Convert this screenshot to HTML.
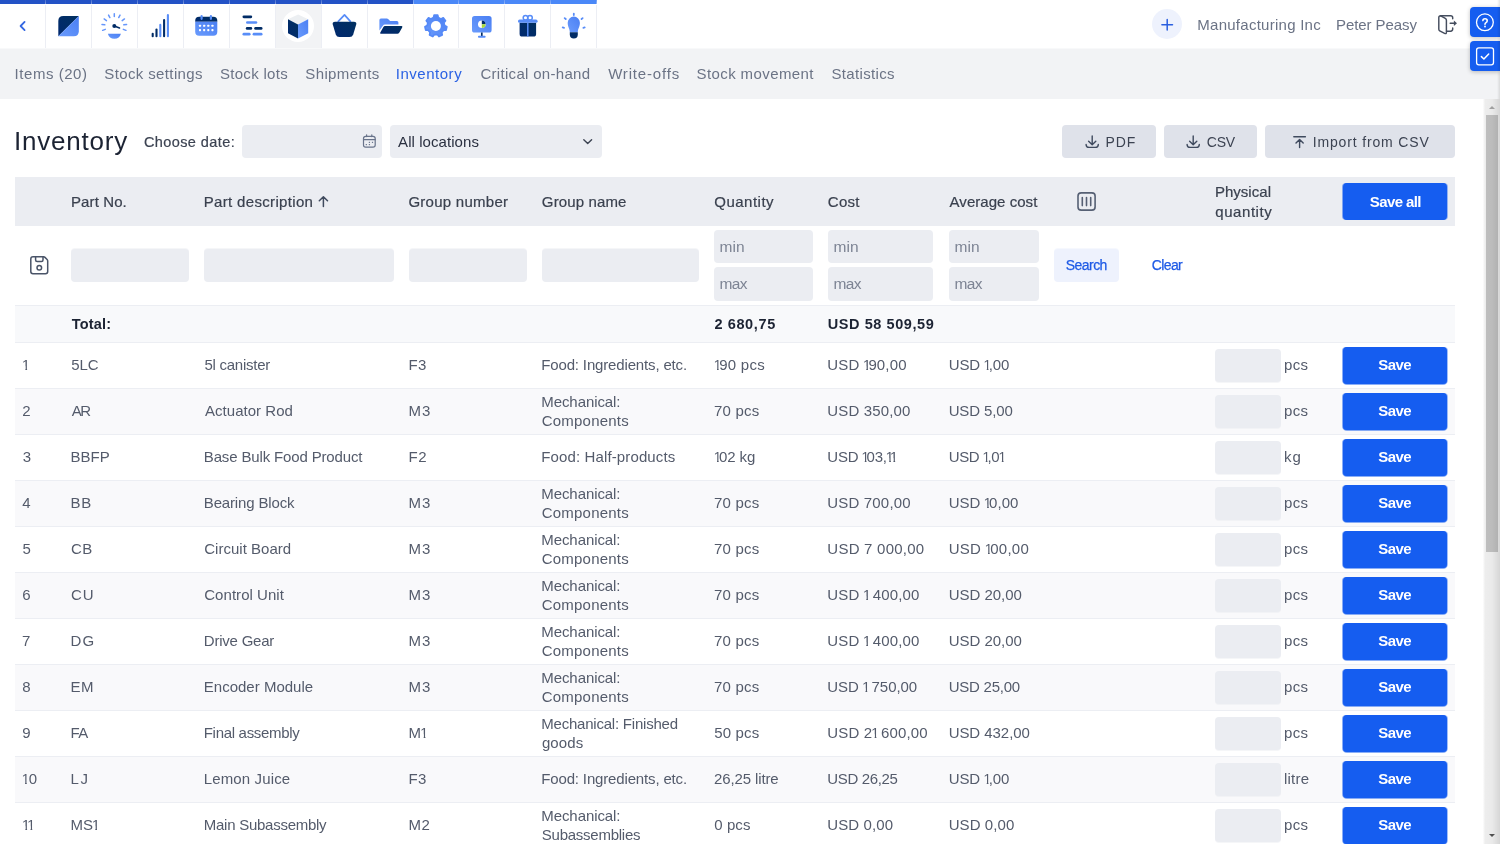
<!DOCTYPE html>
<html lang="en"><head><meta charset="utf-8"><title>Inventory</title>
<style>
*{box-sizing:border-box;margin:0;padding:0}
html,body{width:1500px;height:844px;overflow:hidden;background:#fff}
body{font-family:"Liberation Sans",sans-serif;font-size:15px;color:#4d5464;position:relative}
.x{position:absolute;white-space:nowrap;font-size:15px;line-height:18px;color:#545b6b}
.n1{display:inline-block;font-weight:normal;margin:0 -2.8px 0 -1.1px;clip-path:polygon(1px 0,5.3px 0,5.3px 18px,3.6px 18px,3.6px 10px,1px 10px)}
.topbar,.subnav,.content{will-change:transform}
/* top bar */
.topbar{position:absolute;left:0;top:0;width:1500px;height:49px;background:#fff;border-bottom:1px solid #f8f9fa}
.strip1{position:absolute;left:0;top:0;width:413px;height:4px;background:#2352c6}
.strip2{position:absolute;left:413px;top:0;width:184px;height:4px;background:#4a88f8}
.sep{position:absolute;top:0;width:1px;height:48px;background:linear-gradient(180deg,rgba(236,238,244,.18) 0,rgba(236,238,244,.45) 4px,#fff 4px,#fff 5px,#eceef4 5px)}
.cellact{position:absolute;left:275px;top:4px;width:46px;height:44px;background:#f2f3f5}
.cellact i{position:absolute;left:6.8px;top:5.8px;width:32.2px;height:32.2px;border-radius:50%;background:#fff}
.ico{position:absolute;display:block;overflow:visible}
.subnav{position:absolute;left:0;top:49px;width:1500px;height:50px;background:#f2f3f5}
.nv{color:#6b7385}
.nv.act{color:#2b62e3}
.tr{color:#6b7385}
.plus{position:absolute;left:1152px;top:9px;width:30px;height:30px;border-radius:50%;background:#eef2fd}
.fab{position:absolute;left:1470px;width:30px;height:30.1px;background:#155df0;border-radius:4px 0 0 4px;box-shadow:0 1px 4px rgba(0,0,0,.25)}
/* content */
.content{position:absolute;left:0;top:99px;width:1485px;height:745px;background:#fff;overflow:hidden}
.h1{color:#1c2333}
.lbl{color:#3c4352;-webkit-text-stroke:.2px #3c4352}
.inp{position:absolute;background:#ebedf2;border-radius:4px;display:block}
.sel{color:#2a3040}
.gbtn{position:absolute;top:25.7px;height:33.8px;background:#dfe2ea;border-radius:4px}
.gb{color:#3c4352}
.table{position:absolute;left:15px;top:0;width:1440px;height:745px}
.thead{position:absolute;left:0;top:78px;width:1440px;height:49px;background:#ebedf2}
.th{color:#3a414f;-webkit-text-stroke:.2px #3a414f}
.frow{position:absolute;left:0;top:127px;width:1440px;height:79px;background:#fff}
.ph{color:#7d8494}
.sbtn{position:absolute;background:#eef2fd;border-radius:4px;box-shadow:0 -1px 0 rgba(238,242,253,.5)}
.lk{color:#1f5be6;-webkit-text-stroke:.25px #1f5be6}
.trow{position:absolute;left:0;top:206px;width:1440px;height:37px;background:#f8f9fb;border-top:1px solid #eceef3}
.tt{color:#1c2333;font-weight:bold}
.row{position:absolute;left:0;width:1440px;height:46px;border-top:1px solid #eceef3;background:#fff}
.row.alt{background:#f9f9fb}
.pq{left:1200px;top:6px;width:66px;height:33px;box-shadow:0 1px 0 rgba(235,237,242,.5)}
.btn{position:absolute;background:#155df0;border-radius:4px}
.bt{color:#fff;font-weight:bold}
.save{left:1328px;top:4px;width:104px;height:37px;box-shadow:-1px 0 0 rgba(21,93,240,.5),1px 0 0 rgba(21,93,240,.4),0 1px 0 rgba(21,93,240,.5)}
/* scrollbar */
.edge{position:absolute;left:1497px;top:0;width:3px;height:99px;background:linear-gradient(90deg,rgba(0,0,0,0),rgba(0,0,0,.10))}
.sb{position:absolute;left:1483px;top:99px;width:17px;height:745px;background:linear-gradient(90deg,#fff 0,#f4f4f4 1px,#ededed 2.5px,#eaeaea 9px,#e0e0e0 13px,#d6d6d6 17px)}
.sbt{position:absolute;left:1486px;top:115px;width:12px;height:437px;background:linear-gradient(90deg,#bebebe 0,#bcbcbc 50%,#b1b1b1 100%)}
.sba{position:absolute;left:1488.8px;width:0;height:0;border-left:3.2px solid transparent;border-right:3.2px solid transparent}
.sba.u{top:106.3px;border-bottom:3.8px solid #a0a0a0}
.sba.d{top:833.5px;border-top:3.8px solid #505050}

</style></head>
<body>
<div class="topbar">
<div class="strip1"></div><div class="strip2"></div>
<div class="cellact"><i></i></div>
<div class="sep" style="left:45.00px"></div><div class="sep" style="left:90.94px"></div><div class="sep" style="left:136.88px"></div><div class="sep" style="left:182.82px"></div><div class="sep" style="left:228.76px"></div><div class="sep" style="left:274.70px"></div><div class="sep" style="left:320.64px"></div><div class="sep" style="left:366.58px"></div><div class="sep" style="left:412.52px"></div><div class="sep" style="left:458.46px"></div><div class="sep" style="left:504.40px"></div><div class="sep" style="left:550.34px"></div><div class="sep" style="left:596.28px"></div>
<svg class="ico" style="left:0;top:0" width="600" height="48" viewBox="0 0 600 48">
<defs><linearGradient id="lg" x1="0" y1="1" x2="1" y2="0"><stop offset="0" stop-color="#6a9bfc"/><stop offset="1" stop-color="#4a7ff3"/></linearGradient><linearGradient id="ng" x1="0" y1="1" x2="1" y2="0"><stop offset="0" stop-color="#00286f"/><stop offset="1" stop-color="#01305f"/></linearGradient></defs>
<path d="M24.6 21.9 L20.6 26 L24.6 30.1" fill="none" stroke="#3568e2" stroke-width="1.8" stroke-linecap="round" stroke-linejoin="round"/>
<path d="M58.3 36.2 L78.8 16 L63.3 16 Q58.3 16 58.3 21 Z" fill="url(#ng)"/>
<path d="M58.3 36.2 L78.8 16 L78.8 31.2 Q78.8 36.2 73.8 36.2 Z" fill="url(#lg)"/>
<path d="M105.28 29.38 L102.65 30.34" stroke="#6596fb" stroke-width="1.5" stroke-linecap="round"/>
<path d="M104.78 24.85 L102.01 24.48" stroke="#6596fb" stroke-width="1.5" stroke-linecap="round"/>
<path d="M106.44 20.59 L104.14 18.99" stroke="#6596fb" stroke-width="1.5" stroke-linecap="round"/>
<path d="M109.87 17.58 L108.57 15.10" stroke="#6596fb" stroke-width="1.5" stroke-linecap="round"/>
<path d="M114.30 16.50 L114.30 13.70" stroke="#6596fb" stroke-width="1.5" stroke-linecap="round"/>
<path d="M118.73 17.58 L120.03 15.10" stroke="#6596fb" stroke-width="1.5" stroke-linecap="round"/>
<path d="M122.16 20.59 L124.46 18.99" stroke="#6596fb" stroke-width="1.5" stroke-linecap="round"/>
<path d="M123.82 24.85 L126.59 24.48" stroke="#6596fb" stroke-width="1.5" stroke-linecap="round"/>
<path d="M123.32 29.38 L125.95 30.34" stroke="#6596fb" stroke-width="1.5" stroke-linecap="round"/>
<circle cx="114.3" cy="26.1" r="2" fill="#012c66"/>
<path d="M114.3 26.1 L119.5 27.9" stroke="#012c66" stroke-width="1.6" stroke-linecap="round"/>
<path d="M107.9 33.7 H120.9 A6.7 6.7 0 0 1 107.9 33.7 Z" fill="url(#lg)"/>
<path d="M152.7 33.7 V36.2" stroke="#012c66" stroke-width="2.1" stroke-linecap="round"/>
<path d="M156.5 29.5 V36.2" stroke="#012c66" stroke-width="2.1" stroke-linecap="round"/>
<path d="M160.3 24.9 V36.2" stroke="#588df8" stroke-width="2.1" stroke-linecap="round"/>
<path d="M164.1 20 V36.2" stroke="#012c66" stroke-width="2.1" stroke-linecap="round"/>
<path d="M167.9 15.1 V36.2" stroke="#588df8" stroke-width="2.1" stroke-linecap="round"/>
<path d="M195.2 21.8 V20.8 Q195.2 16.8 199.2 16.8 H213.3 Q217.3 16.8 217.3 20.8 V21.8 Z" fill="url(#ng)"/>
<path d="M195.2 21.8 H217.3 V31.8 Q217.3 35.8 213.3 35.8 H199.2 Q195.2 35.8 195.2 31.8 Z" fill="url(#lg)"/>
<path d="M201.6 16.2 V18.8" stroke="#588df8" stroke-width="2.2" stroke-linecap="round"/>
<path d="M210.9 16.2 V18.8" stroke="#588df8" stroke-width="2.2" stroke-linecap="round"/>
<rect x="198.95" y="24.75" width="2.1" height="2.1" rx=".6" fill="#fff"/>
<rect x="203.1" y="24.75" width="2.1" height="2.1" rx=".6" fill="#fff"/>
<rect x="207.25" y="24.75" width="2.1" height="2.1" rx=".6" fill="#fff"/>
<rect x="211.4" y="24.75" width="2.1" height="2.1" rx=".6" fill="#fff"/>
<rect x="198.95" y="29.05" width="2.1" height="2.1" rx=".6" fill="#fff"/>
<rect x="203.1" y="29.05" width="2.1" height="2.1" rx=".6" fill="#fff"/>
<rect x="207.25" y="29.05" width="2.1" height="2.1" rx=".6" fill="#fff"/>
<rect x="211.4" y="29.05" width="2.1" height="2.1" rx=".6" fill="#fff"/>
<path d="M243.85 16.8 H250.85" stroke="#012c66" stroke-width="2.7" stroke-linecap="round"/>
<path d="M247.35 22.5 H255.95" stroke="#588df8" stroke-width="2.7" stroke-linecap="round"/>
<path d="M247.15 28.4 H250.85" stroke="#012c66" stroke-width="2.7" stroke-linecap="round"/>
<path d="M255.55 28.4 H261.15" stroke="#012c66" stroke-width="2.7" stroke-linecap="round"/>
<path d="M243.85 34.2 H249.25" stroke="#588df8" stroke-width="2.7" stroke-linecap="round"/>
<path d="M253.95 34.2 H261.15" stroke="#588df8" stroke-width="2.7" stroke-linecap="round"/>
<path d="M298.1 14.4 L308.2 19.3 L298 24.6 L288 19.3 Z" fill="#eceff2"/>
<path d="M288 19.3 L298 24.6 V38.4 L288 33.3 Z" fill="url(#ng)"/>
<path d="M298 24.6 L308.2 19.3 V33.3 L298 38.4 Z" fill="url(#lg)"/>
<path d="M337.8 21.9 L344.5 14.9 L350.8 21.9" fill="none" stroke="#588df8" stroke-width="1.7" stroke-linejoin="round"/>
<path d="M335.2 21.7 H353.8 Q357 21.7 356.2 24.6 L353.2 34.6 Q352.4 37.1 349.6 37.1 H339.4 Q336.6 37.1 335.8 34.6 L332.8 24.6 Q332 21.7 335.2 21.7 Z" fill="url(#ng)"/>
<path d="M379.4 30.6 V19.9 Q379.4 18.4 380.9 18.4 H386.9 Q387.6 18.4 388.1 18.9 L390.1 20.9 H396.9 Q398.4 20.9 398.4 22.4 V24.4 H385 Q383.6 24.4 382.9 25.7 Z" fill="url(#lg)"/>
<path d="M385 26.1 H401.4 Q402.9 26.1 402.2 27.4 L399.2 32.8 Q398.6 33.8 397.4 33.8 H381 Q379.6 33.8 380.3 32.6 L383.4 27 Q383.9 26.1 385 26.1 Z" fill="url(#ng)"/>
<g fill="url(#lg)"><path fill-rule="evenodd" stroke="#5589f7" stroke-width="1.7" stroke-linejoin="round" d="M433.50 17.64 L434.08 15.15 L437.72 15.15 L438.30 17.64 L440.94 18.91 L443.25 17.82 L445.51 20.66 L443.93 22.66 L444.59 25.52 L446.88 26.64 L446.07 30.18 L443.52 30.20 L441.69 32.49 L442.24 34.99 L438.97 36.56 L437.37 34.58 L434.43 34.58 L432.83 36.56 L429.56 34.99 L430.11 32.49 L428.28 30.20 L425.73 30.18 L424.92 26.64 L427.21 25.52 L427.87 22.66 L426.29 20.66 L428.55 17.82 L430.86 18.91 Z"/><circle cx="435.9" cy="26" r="5" fill="#fff"/></g>
<rect x="472" y="16.1" width="19.6" height="16.4" rx="2.6" fill="url(#lg)"/>
<path d="M481.8 32.5 V36" stroke="#012c66" stroke-width="1.7"/>
<path d="M478.9 36.8 H484.7" stroke="#588df8" stroke-width="1.9" stroke-linecap="round"/>
<circle cx="481.8" cy="24.2" r="3.8" fill="#fff"/>
<path d="M481.8 24.2 V20.4 A3.8 3.8 0 0 1 485.6 24.2 Z" fill="#012c66"/>
<path d="M481.8 24.2 H485.6 A3.8 3.8 0 0 1 481.8 28 Z" fill="#a9d93c"/>
<circle cx="525.5" cy="17.8" r="2.3" fill="none" stroke="#588df8" stroke-width="1.5"/>
<circle cx="530" cy="17.8" r="2.3" fill="none" stroke="#588df8" stroke-width="1.5"/>
<path d="M519.6 22.7 H536.1 V33.9 Q536.1 36.5 533.5 36.5 H522.2 Q519.6 36.5 519.6 33.9 Z" fill="url(#ng)"/>
<rect x="518" y="19.6" width="19.6" height="3.2" rx="1.6" fill="#588df8"/>
<path d="M527.8 22.7 V36.5" stroke="#588df8" stroke-width="1.5"/>
<path d="M569.8 32.2 C569.8 28.5 567.7 27 567.7 22.7 A6.1 6.1 0 0 1 579.9 22.7 C579.9 27 577.8 28.5 577.8 32.2 Z" fill="url(#lg)"/>
<path d="M569.8 32.2 H577.8 V34.4 A4 4 0 0 1 569.8 34.4 Z" fill="#012c66"/>
<path d="M573.80 15.10 L573.80 13.70" stroke="#588df8" stroke-width="1.8" stroke-linecap="round"/>
<path d="M565.74 19.05 L564.66 18.15" stroke="#588df8" stroke-width="1.8" stroke-linecap="round"/>
<path d="M581.56 19.05 L582.64 18.15" stroke="#588df8" stroke-width="1.8" stroke-linecap="round"/>
<path d="M564.08 27.78 L562.72 27.42" stroke="#588df8" stroke-width="1.8" stroke-linecap="round"/>
<path d="M583.32 27.78 L584.68 27.42" stroke="#588df8" stroke-width="1.8" stroke-linecap="round"/>
</svg>
<div class="plus"></div>
<svg class="ico" style="left:1140px;top:0" width="360" height="100" viewBox="1140 0 360 100">
<path d="M1161.9 24.8 H1172.5 M1167.2 19.5 V30.1" stroke="#2a5fe0" stroke-width="1.5" stroke-linecap="round"/>
<g fill="none" stroke="#454d5e" stroke-width="1.45" stroke-linejoin="round" stroke-linecap="round">
<path d="M1440.7 15.7 Q1438.8 15.7 1438.8 17.6 V29.3 Q1438.8 30.3 1439.7 30.8 L1444.6 33.4 Q1446.4 34.2 1446.4 32.3 V20.2 Q1446.4 18.9 1445.3 18.3 L1440.7 15.9"/>
<path d="M1440.7 15.7 H1450.6 Q1452.7 15.7 1452.7 17.8 V18.8 M1452.7 28 V29.1 Q1452.7 31.2 1450.6 31.2 H1446.6"/>
<path d="M1450.2 23.3 H1454.5"/>
</g>
<path d="M1453.9 20.5 L1457 23.3 L1453.9 26.1 Z" fill="#454d5e"/>
</svg>
<span class="x tr" style="left:1197.28px;top:15.80px;letter-spacing:0.263px">Manufacturing Inc</span>
<span class="x tr" style="left:1335.98px;top:15.80px;letter-spacing:-0.067px">Peter Peasy</span>
</div>
<div class="subnav">
<span class="x nv" style="left:14.62px;top:15.80px;letter-spacing:0.531px">Items (20)</span>
<span class="x nv" style="left:104.31px;top:15.80px;letter-spacing:0.373px">Stock settings</span>
<span class="x nv" style="left:219.91px;top:15.80px;letter-spacing:0.310px">Stock lots</span>
<span class="x nv" style="left:305.31px;top:15.80px;letter-spacing:0.380px">Shipments</span>
<span class="x nv act" style="left:395.82px;top:15.80px;letter-spacing:0.515px">Inventory</span>
<span class="x nv" style="left:480.45px;top:15.80px;letter-spacing:0.304px">Critical on-hand</span>
<span class="x nv" style="left:608.14px;top:15.80px;letter-spacing:0.830px">Write-offs</span>
<span class="x nv" style="left:696.51px;top:15.80px;letter-spacing:0.407px">Stock movement</span>
<span class="x nv" style="left:831.51px;top:15.80px;letter-spacing:0.335px">Statistics</span>
</div>
<div class="fab" style="top:7.3px"></div>
<div class="fab" style="top:41.2px"></div>
<svg class="ico" style="left:1466px;top:0" width="34" height="80" viewBox="1466 0 34 80">
<circle cx="1484.9" cy="22.3" r="8.4" fill="none" stroke="#fff" stroke-width="1.3"/>
<path d="M1482.9 20.6 Q1482.9 18.8 1485 18.8 Q1487.2 18.8 1487.2 20.7 Q1487.2 21.9 1486 22.6 Q1485 23.2 1485 24.3" fill="none" stroke="#fff" stroke-width="1.6" stroke-linecap="round"/>
<circle cx="1485" cy="26.5" r=".9" fill="#fff"/>
<rect x="1476.6" y="47.9" width="16.9" height="16.9" rx="2.2" fill="none" stroke="#fff" stroke-width="1.3"/>
<path d="M1481.4 56.6 L1483.9 59 L1488.7 54" fill="none" stroke="#fff" stroke-width="1.5" stroke-linecap="round" stroke-linejoin="round"/>
</svg>
<div class="content">
<span class="x h1" style="left:13.89px;top:33.49px;letter-spacing:0.804px;font-size:26px">Inventory</span>
<span class="x lbl" style="left:143.88px;top:33.98px;letter-spacing:0.416px;font-size:14.5px">Choose date:</span>
<span class="inp" style="left:242px;top:25.7px;width:140.4px;height:33.6px"></span>
<span class="inp" style="left:390px;top:25.7px;width:211.8px;height:33.6px"></span>
<span class="x sel" style="left:398.07px;top:33.50px;letter-spacing:0.069px">All locations</span>
<div class="gbtn" style="left:1062.3px;width:93.4px"></div>
<div class="gbtn" style="left:1163.5px;width:93.5px"></div>
<div class="gbtn" style="left:1265px;width:189.6px"></div>
<span class="x gb" style="left:1105.44px;top:34.05px;letter-spacing:0.959px;font-size:14px">PDF</span>
<span class="x gb" style="left:1206.68px;top:34.05px;letter-spacing:-0.150px;font-size:14px">CSV</span>
<span class="x gb" style="left:1312.72px;top:34.05px;letter-spacing:0.842px;font-size:14px">Import from CSV</span>
<div class="table">
<div class="thead">
<span class="x th" style="left:55.98px;top:16.40px;letter-spacing:0.109px">Part No.</span>
<span class="x th" style="left:188.78px;top:16.40px;letter-spacing:0.331px">Part description</span>
<span class="x th" style="left:393.45px;top:16.40px;letter-spacing:0.262px">Group number</span>
<span class="x th" style="left:526.85px;top:16.40px;letter-spacing:0.137px">Group name</span>
<span class="x th" style="left:699.28px;top:16.40px;letter-spacing:0.496px">Quantity</span>
<span class="x th" style="left:812.85px;top:16.40px;letter-spacing:0.267px">Cost</span>
<span class="x th" style="left:934.57px;top:16.40px;letter-spacing:0.043px">Average cost</span>
<span class="x th" style="left:1199.88px;top:5.80px;letter-spacing:0.035px">Physical</span>
<span class="x th" style="left:1200.28px;top:25.60px;letter-spacing:0.561px">quantity</span>
<span class="btn" style="left:1328px;top:6px;width:104px;height:37px;box-shadow:-1px 0 0 rgba(21,93,240,.5),1px 0 0 rgba(21,93,240,.4)"></span>
<span class="x bt" style="left:1354.76px;top:15.80px;letter-spacing:-0.600px">Save all</span>
</div>
<div class="frow">
<span class="inp" style="left:56px;top:23px;width:118px;height:33px;box-shadow:0 -1px 0 rgba(235,237,242,.5)"></span><span class="inp" style="left:189px;top:23px;width:190px;height:33px;box-shadow:0 -1px 0 rgba(235,237,242,.5)"></span><span class="inp" style="left:394px;top:23px;width:118px;height:33px;box-shadow:0 -1px 0 rgba(235,237,242,.5)"></span><span class="inp" style="left:527px;top:23px;width:157px;height:33px;box-shadow:0 -1px 0 rgba(235,237,242,.5)"></span><span class="inp" style="left:699.3px;top:4px;width:98.7px;height:33.3px"></span><span class="inp" style="left:699.3px;top:41.3px;width:98.7px;height:33.5px"></span><span class="inp" style="left:813px;top:4px;width:105.4px;height:33.3px"></span><span class="inp" style="left:813px;top:41.3px;width:105.4px;height:33.5px"></span><span class="inp" style="left:933.8px;top:4px;width:90px;height:33.3px"></span><span class="inp" style="left:933.8px;top:41.3px;width:90px;height:33.5px"></span>
<span class="x ph" style="left:704.47px;top:12.03px;letter-spacing:0.081px;font-size:15.5px">min</span><span class="x ph" style="left:704.47px;top:49.33px;letter-spacing:-0.581px;font-size:15.5px">max</span><span class="x ph" style="left:818.47px;top:12.03px;letter-spacing:0.081px;font-size:15.5px">min</span><span class="x ph" style="left:818.47px;top:49.33px;letter-spacing:-0.581px;font-size:15.5px">max</span><span class="x ph" style="left:939.47px;top:12.03px;letter-spacing:0.081px;font-size:15.5px">min</span><span class="x ph" style="left:939.47px;top:49.33px;letter-spacing:-0.581px;font-size:15.5px">max</span>
<span class="sbtn" style="left:1039px;top:23px;width:65px;height:33px"></span>
<span class="x lk" style="left:1050.78px;top:30.15px;letter-spacing:-0.543px;font-size:14px">Search</span>
<span class="x lk" style="left:1136.68px;top:30.15px;letter-spacing:-0.600px;font-size:14px">Clear</span>
</div>
<div class="trow">
<span class="x tt" style="left:56.84px;top:8.98px;letter-spacing:0.191px;font-size:14.5px">Total:</span><span class="x tt" style="left:699.40px;top:8.98px;letter-spacing:0.624px;font-size:14.5px">2 680,75</span><span class="x tt" style="left:812.73px;top:8.98px;letter-spacing:0.579px;font-size:14.5px">USD 58 509,59</span>
</div>
<div class="row" style="top:243px"><span class="x " style="left:7.88px;top:13.20px;letter-spacing:0.000px"><b class="n1">1</b></span><span class="x " style="left:56.21px;top:13.20px;letter-spacing:-0.022px">5LC</span><span class="x " style="left:189.41px;top:13.20px;letter-spacing:-0.253px">5l canister</span><span class="x " style="left:393.58px;top:13.20px;letter-spacing:0.375px">F3</span><span class="x " style="left:526.28px;top:13.20px;letter-spacing:-0.154px">Food: Ingredients, etc.</span><span class="x " style="left:699.47px;top:13.20px;letter-spacing:0.254px"><b class="n1">1</b>90 pcs</span><span class="x " style="left:812.34px;top:13.20px;letter-spacing:0.148px">USD <b class="n1">1</b>90,00</span><span class="x " style="left:933.64px;top:13.20px;letter-spacing:-0.054px">USD <b class="n1">1</b>,00</span><span class="inp pq"></span><span class="x " style="left:1269.03px;top:13.20px;letter-spacing:0.378px">pcs</span><span class="btn save"></span><span class="x bt" style="left:1363.16px;top:12.80px;letter-spacing:-0.498px">Save</span></div>
<div class="row alt" style="top:289px"><span class="x " style="left:7.15px;top:13.20px;letter-spacing:0.000px">2</span><span class="x " style="left:56.77px;top:13.20px;letter-spacing:-1.494px">AR</span><span class="x " style="left:189.97px;top:13.20px;letter-spacing:0.040px">Actuator Rod</span><span class="x " style="left:393.58px;top:13.20px;letter-spacing:0.831px">M3</span><span class="x " style="left:526.28px;top:3.70px;letter-spacing:-0.077px">Mechanical:</span><span class="x " style="left:526.75px;top:22.70px;letter-spacing:0.213px">Components</span><span class="x " style="left:699.02px;top:13.20px;letter-spacing:0.185px">70 pcs</span><span class="x " style="left:812.34px;top:13.20px;letter-spacing:0.137px">USD 350,00</span><span class="x " style="left:933.64px;top:13.20px;letter-spacing:-0.112px">USD 5,00</span><span class="inp pq"></span><span class="x " style="left:1269.03px;top:13.20px;letter-spacing:0.378px">pcs</span><span class="btn save"></span><span class="x bt" style="left:1363.16px;top:12.80px;letter-spacing:-0.498px">Save</span></div>
<div class="row" style="top:335px"><span class="x " style="left:7.64px;top:13.20px;letter-spacing:0.000px">3</span><span class="x " style="left:55.58px;top:13.20px;letter-spacing:0.004px">BBFP</span><span class="x " style="left:188.78px;top:13.20px;letter-spacing:-0.145px">Base Bulk Food Product</span><span class="x " style="left:393.58px;top:13.20px;letter-spacing:0.469px">F2</span><span class="x " style="left:526.28px;top:13.20px;letter-spacing:0.124px">Food: Half-products</span><span class="x " style="left:699.47px;top:13.20px;letter-spacing:-0.047px"><b class="n1">1</b>02 kg</span><span class="x " style="left:812.34px;top:13.20px;letter-spacing:-0.223px">USD <b class="n1">1</b>03,<b class="n1">1</b><b class="n1">1</b></span><span class="x " style="left:933.64px;top:13.20px;letter-spacing:-0.307px">USD <b class="n1">1</b>,0<b class="n1">1</b></span><span class="inp pq"></span><span class="x " style="left:1269.00px;top:13.20px;letter-spacing:0.925px">kg</span><span class="btn save"></span><span class="x bt" style="left:1363.16px;top:12.80px;letter-spacing:-0.498px">Save</span></div>
<div class="row alt" style="top:381px"><span class="x " style="left:7.26px;top:13.20px;letter-spacing:0.000px">4</span><span class="x " style="left:55.58px;top:13.20px;letter-spacing:0.600px">BB</span><span class="x " style="left:188.78px;top:13.20px;letter-spacing:-0.145px">Bearing Block</span><span class="x " style="left:393.58px;top:13.20px;letter-spacing:0.831px">M3</span><span class="x " style="left:526.28px;top:3.70px;letter-spacing:-0.077px">Mechanical:</span><span class="x " style="left:526.75px;top:22.70px;letter-spacing:0.213px">Components</span><span class="x " style="left:699.02px;top:13.20px;letter-spacing:0.185px">70 pcs</span><span class="x " style="left:812.34px;top:13.20px;letter-spacing:0.170px">USD 700,00</span><span class="x " style="left:933.64px;top:13.20px;letter-spacing:0.034px">USD <b class="n1">1</b>0,00</span><span class="inp pq"></span><span class="x " style="left:1269.03px;top:13.20px;letter-spacing:0.378px">pcs</span><span class="btn save"></span><span class="x bt" style="left:1363.16px;top:12.80px;letter-spacing:-0.498px">Save</span></div>
<div class="row" style="top:427px"><span class="x " style="left:7.61px;top:13.20px;letter-spacing:0.000px">5</span><span class="x " style="left:56.05px;top:13.20px;letter-spacing:0.287px">CB</span><span class="x " style="left:189.25px;top:13.20px;letter-spacing:0.011px">Circuit Board</span><span class="x " style="left:393.58px;top:13.20px;letter-spacing:0.831px">M3</span><span class="x " style="left:526.28px;top:3.70px;letter-spacing:-0.077px">Mechanical:</span><span class="x " style="left:526.75px;top:22.70px;letter-spacing:0.213px">Components</span><span class="x " style="left:699.02px;top:13.20px;letter-spacing:0.185px">70 pcs</span><span class="x " style="left:812.34px;top:13.20px;letter-spacing:0.239px">USD 7 000,00</span><span class="x " style="left:933.64px;top:13.20px;letter-spacing:0.259px">USD <b class="n1">1</b>00,00</span><span class="inp pq"></span><span class="x " style="left:1269.03px;top:13.20px;letter-spacing:0.378px">pcs</span><span class="btn save"></span><span class="x bt" style="left:1363.16px;top:12.80px;letter-spacing:-0.498px">Save</span></div>
<div class="row alt" style="top:473px"><span class="x " style="left:7.15px;top:13.20px;letter-spacing:0.000px">6</span><span class="x " style="left:56.05px;top:13.20px;letter-spacing:0.819px">CU</span><span class="x " style="left:189.25px;top:13.20px;letter-spacing:0.041px">Control Unit</span><span class="x " style="left:393.58px;top:13.20px;letter-spacing:0.831px">M3</span><span class="x " style="left:526.28px;top:3.70px;letter-spacing:-0.077px">Mechanical:</span><span class="x " style="left:526.75px;top:22.70px;letter-spacing:0.213px">Components</span><span class="x " style="left:699.02px;top:13.20px;letter-spacing:0.185px">70 pcs</span><span class="x " style="left:812.34px;top:13.20px;letter-spacing:0.148px">USD <b class="n1">1</b> 400,00</span><span class="x " style="left:933.64px;top:13.20px;letter-spacing:-0.016px">USD 20,00</span><span class="inp pq"></span><span class="x " style="left:1269.03px;top:13.20px;letter-spacing:0.378px">pcs</span><span class="btn save"></span><span class="x bt" style="left:1363.16px;top:12.80px;letter-spacing:-0.498px">Save</span></div>
<div class="row" style="top:519px"><span class="x " style="left:7.12px;top:13.20px;letter-spacing:0.000px">7</span><span class="x " style="left:55.58px;top:13.20px;letter-spacing:1.012px">DG</span><span class="x " style="left:188.78px;top:13.20px;letter-spacing:-0.218px">Drive Gear</span><span class="x " style="left:393.58px;top:13.20px;letter-spacing:0.831px">M3</span><span class="x " style="left:526.28px;top:3.70px;letter-spacing:-0.077px">Mechanical:</span><span class="x " style="left:526.75px;top:22.70px;letter-spacing:0.213px">Components</span><span class="x " style="left:699.02px;top:13.20px;letter-spacing:0.185px">70 pcs</span><span class="x " style="left:812.34px;top:13.20px;letter-spacing:0.148px">USD <b class="n1">1</b> 400,00</span><span class="x " style="left:933.64px;top:13.20px;letter-spacing:-0.016px">USD 20,00</span><span class="inp pq"></span><span class="x " style="left:1269.03px;top:13.20px;letter-spacing:0.378px">pcs</span><span class="btn save"></span><span class="x bt" style="left:1363.16px;top:12.80px;letter-spacing:-0.498px">Save</span></div>
<div class="row alt" style="top:565px"><span class="x " style="left:7.24px;top:13.20px;letter-spacing:0.000px">8</span><span class="x " style="left:55.58px;top:13.20px;letter-spacing:0.537px">EM</span><span class="x " style="left:188.78px;top:13.20px;letter-spacing:0.010px">Encoder Module</span><span class="x " style="left:393.58px;top:13.20px;letter-spacing:0.831px">M3</span><span class="x " style="left:526.28px;top:3.70px;letter-spacing:-0.077px">Mechanical:</span><span class="x " style="left:526.75px;top:22.70px;letter-spacing:0.213px">Components</span><span class="x " style="left:699.02px;top:13.20px;letter-spacing:0.185px">70 pcs</span><span class="x " style="left:812.34px;top:13.20px;letter-spacing:-0.043px">USD <b class="n1">1</b> 750,00</span><span class="x " style="left:933.64px;top:13.20px;letter-spacing:-0.228px">USD 25,00</span><span class="inp pq"></span><span class="x " style="left:1269.03px;top:13.20px;letter-spacing:0.378px">pcs</span><span class="btn save"></span><span class="x bt" style="left:1363.16px;top:12.80px;letter-spacing:-0.498px">Save</span></div>
<div class="row" style="top:611px"><span class="x " style="left:7.21px;top:13.20px;letter-spacing:0.000px">9</span><span class="x " style="left:55.58px;top:13.20px;letter-spacing:-0.694px">FA</span><span class="x " style="left:188.78px;top:13.20px;letter-spacing:-0.306px">Final assembly</span><span class="x " style="left:393.58px;top:13.20px;letter-spacing:0.104px">M<b class="n1">1</b></span><span class="x " style="left:526.28px;top:3.70px;letter-spacing:-0.217px">Mechanical: Finished</span><span class="x " style="left:526.88px;top:22.70px;letter-spacing:0.145px">goods</span><span class="x " style="left:699.21px;top:13.20px;letter-spacing:0.147px">50 pcs</span><span class="x " style="left:812.34px;top:13.20px;letter-spacing:0.132px">USD 2<b class="n1">1</b> 600,00</span><span class="x " style="left:933.64px;top:13.20px;letter-spacing:-0.052px">USD 432,00</span><span class="inp pq"></span><span class="x " style="left:1269.03px;top:13.20px;letter-spacing:0.378px">pcs</span><span class="btn save"></span><span class="x bt" style="left:1363.16px;top:12.80px;letter-spacing:-0.498px">Save</span></div>
<div class="row alt" style="top:657px"><span class="x " style="left:7.57px;top:13.20px;letter-spacing:1.700px"><b class="n1">1</b>0</span><span class="x " style="left:55.58px;top:13.20px;letter-spacing:1.700px">LJ</span><span class="x " style="left:188.78px;top:13.20px;letter-spacing:0.131px">Lemon Juice</span><span class="x " style="left:393.58px;top:13.20px;letter-spacing:0.375px">F3</span><span class="x " style="left:526.28px;top:13.20px;letter-spacing:-0.154px">Food: Ingredients, etc.</span><span class="x " style="left:699.05px;top:13.20px;letter-spacing:-0.127px">26,25 litre</span><span class="x " style="left:812.34px;top:13.20px;letter-spacing:-0.362px">USD 26,25</span><span class="x " style="left:933.64px;top:13.20px;letter-spacing:-0.054px">USD <b class="n1">1</b>,00</span><span class="inp pq"></span><span class="x " style="left:1269.00px;top:13.20px;letter-spacing:0.200px">litre</span><span class="btn save"></span><span class="x bt" style="left:1363.16px;top:12.80px;letter-spacing:-0.498px">Save</span></div>
<div class="row" style="top:703px"><span class="x " style="left:7.88px;top:13.20px;letter-spacing:0.691px"><b class="n1">1</b><b class="n1">1</b></span><span class="x " style="left:55.58px;top:13.20px;letter-spacing:-0.148px">MS<b class="n1">1</b></span><span class="x " style="left:188.78px;top:13.20px;letter-spacing:-0.258px">Main Subassembly</span><span class="x " style="left:393.58px;top:13.20px;letter-spacing:0.325px">M2</span><span class="x " style="left:526.28px;top:3.70px;letter-spacing:-0.077px">Mechanical:</span><span class="x " style="left:526.81px;top:22.70px;letter-spacing:-0.250px">Subassemblies</span><span class="x " style="left:699.21px;top:13.20px;letter-spacing:0.095px">0 pcs</span><span class="x " style="left:812.34px;top:13.20px;letter-spacing:0.088px">USD 0,00</span><span class="x " style="left:933.64px;top:13.20px;letter-spacing:0.088px">USD 0,00</span><span class="inp pq"></span><span class="x " style="left:1269.03px;top:13.20px;letter-spacing:0.378px">pcs</span><span class="btn save"></span><span class="x bt" style="left:1363.16px;top:12.80px;letter-spacing:-0.498px">Save</span></div>
</div>
<svg class="ico" style="left:0;top:0" width="1485" height="745" viewBox="0 99 1485 745">
<g fill="none" stroke="#68738a" stroke-width="1.2" stroke-linecap="round">
<rect x="363.5" y="136.4" width="11.7" height="10.8" rx="2.2"/>
<path d="M363.5 139.6 H375.2 M366.6 134.8 V136.6 M371.8 134.8 V136.6"/>
</g>
<rect x="368.75" y="141.65" width="1.3" height="1.3" rx=".4" fill="#68738a"/>
<rect x="371.85" y="141.65" width="1.3" height="1.3" rx=".4" fill="#68738a"/>
<rect x="365.65" y="143.95" width="1.3" height="1.3" rx=".4" fill="#68738a"/>
<rect x="368.75" y="143.95" width="1.3" height="1.3" rx=".4" fill="#68738a"/>
<path d="M583.8 139.7 L587.7 143.5 L591.6 139.7" fill="none" stroke="#3c4352" stroke-width="1.4" stroke-linecap="round" stroke-linejoin="round"/>
<path d="M1092.2 135.9 V144.4 M1088.6 141.2 L1092.2 144.7 L1095.8 141.2 M1086.1 144.4 Q1086.1 147.4 1089.1 147.4 H1095.3 Q1098.3 147.4 1098.3 144.4" fill="none" stroke="#3f4a5e" stroke-width="1.4" stroke-linecap="round" stroke-linejoin="round"/>
<path d="M1193.2 135.9 V144.4 M1189.6 141.2 L1193.2 144.7 L1196.8 141.2 M1187.1 144.4 Q1187.1 147.4 1190.1 147.4 H1196.3 Q1199.3 147.4 1199.3 144.4" fill="none" stroke="#3f4a5e" stroke-width="1.4" stroke-linecap="round" stroke-linejoin="round"/>
<path d="M1293.8 136.7 H1305.4 M1299.6 147.6 V139.6 M1296 143 L1299.6 139.4 L1303.2 143" fill="none" stroke="#3f4a5e" stroke-width="1.4" stroke-linecap="round" stroke-linejoin="round"/>
<path d="M323.4 206.5 V197 M319.3 200.8 L323.4 196.7 L327.5 200.8" fill="none" stroke="#3f4a5e" stroke-width="1.5" stroke-linecap="round" stroke-linejoin="round"/>
<rect x="1078" y="192.9" width="17.1" height="17.2" rx="3.2" fill="none" stroke="#566074" stroke-width="1.6"/>
<path d="M1082.3 197.6 V205.6 M1086.5 197.6 V205.6 M1090.7 197.6 V205.6" stroke="#566074" stroke-width="1.6" stroke-linecap="round"/>
<g fill="none" stroke="#4a5468" stroke-width="1.5" stroke-linejoin="round">
<path d="M33 256.8 H43.6 Q44.4 256.8 45 257.4 L47.1 259.5 Q47.7 260.1 47.7 260.9 V271.6 Q47.7 273.8 45.5 273.8 H33 Q30.8 273.8 30.8 271.6 V259 Q30.8 256.8 33 256.8 Z"/>
<path d="M35.6 256.8 V260 Q35.6 261.5 37.1 261.5 H41.5 Q43 261.5 43 260 V256.8"/>
<circle cx="39.3" cy="267.7" r="2.3"/>
</g>
</svg>
</div>
<div class="sb"></div><div class="sbt"></div><div class="sba u"></div><div class="sba d"></div><div class="edge"></div>
</body></html>
